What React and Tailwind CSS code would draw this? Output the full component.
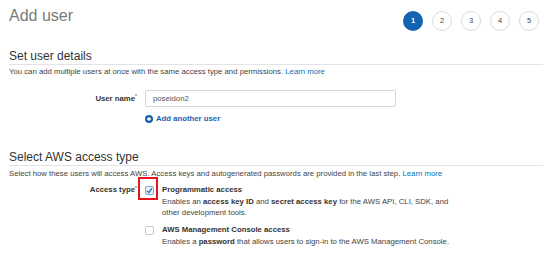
import React from 'react';

const STEPS = [1, 2, 3, 4, 5];

function StepCircle({ n, active }) {
  return (
    <div
      className={
        active
          ? 'w-[20px] h-[20px] rounded-full bg-[#1462b2] text-white flex items-center justify-center text-[7.5px] font-bold'
          : 'w-[20px] h-[20px] rounded-full bg-white border border-[#dcdcdc] text-[#444] flex items-center justify-center text-[7.5px]'
      }
    >
      {n}
    </div>
  );
}

function Checkbox({ checked }) {
  return checked ? (
    <div className="w-[9px] h-[9px] rounded-[2px] border border-[#7aa7d9] bg-[#e6f0fb] flex items-center justify-center">
      <svg width="7" height="7" viewBox="0 0 10 10">
        <path d="M1.5 5.5 L4 8 L8.5 2" fill="none" stroke="#1a5fb0" strokeWidth="1.8" />
      </svg>
    </div>
  ) : (
    <div className="w-[9px] h-[9px] rounded-[2px] border border-[#c8c8c8] bg-white" />
  );
}

export default function App() {
  return (
    <div className="w-[552px] h-[270px] bg-white px-[9px] overflow-hidden font-['Liberation_Sans',Arial,sans-serif] text-[#444]">
      {/* header */}
      <div className="flex items-start justify-between pt-[6px] pr-[4px]">
        <h1 className="text-[16px] leading-[20px] text-[#7a7a7a]">Add user</h1>
        <div className="flex gap-[9px] mt-[5px]">
          {STEPS.map((n) => (
            <StepCircle key={n} n={n} active={n === 1} />
          ))}
        </div>
      </div>

      {/* Set user details */}
      <h2 className="mt-[17px] text-[12px] leading-[16px] text-[#333] border-b border-[#e3e3e3]">Set user details</h2>
      <p className="mt-[2px] text-[7.75px] leading-[10px]">
        You can add multiple users at once with the same access type and permissions.{' '}
        <span className="text-[#0073bb]">Learn more</span>
      </p>

      <div className="mt-[13px] flex items-center gap-[8px]">
        <div className="w-[128px] text-right text-[7.75px] font-bold text-[#333]">
          User name<sup className="text-[5px] font-normal">*</sup>
        </div>
        <div className="w-[251px] h-[17px] border border-[#d5d5d5] rounded-[2px] flex items-center pl-[7px] text-[7.75px] text-[#555]">
          poseidon2
        </div>
      </div>

      <div className="mt-[7px] ml-[136px] flex items-center gap-[3px] text-[7.75px] leading-[10px] font-bold text-[#1a5fb0]">
        <svg width="8" height="8" viewBox="0 0 10 10">
          <circle cx="5" cy="5" r="5" fill="#1a5fb0" />
          <path d="M5 2.4 V7.6 M2.4 5 H7.6" stroke="white" strokeWidth="1.6" />
        </svg>
        Add another user
      </div>

      {/* Select AWS access type */}
      <h2 className="mt-[25px] text-[12px] leading-[16px] text-[#333] border-b border-[#e3e3e3]">Select AWS access type</h2>
      <p className="mt-[3px] text-[7.75px] leading-[10px]">
        Select how these users will access AWS. Access keys and autogenerated passwords are provided in the last step.{' '}
        <span className="text-[#0073bb]">Learn more</span>
      </p>

      <div className="mt-[5px] flex gap-[8px] text-[7.75px] leading-[11.7px]">
        <div className="w-[128px] shrink-0 text-right font-bold text-[#333]">
          Access type<sup className="text-[5px] font-normal">*</sup>
        </div>
        <div className="flex flex-col gap-[5.3px]">
          <div className="flex gap-[8px]">
            <div className="relative mt-[1.5px] shrink-0">
              <Checkbox checked />
              <div className="absolute left-[-7px] top-[-9px] w-[20px] h-[23px] border-2 border-[#e8141c]" />
            </div>
            <div className="w-[292px]">
              <div className="font-bold text-[#333]">Programmatic access</div>
              <div>
                Enables an <b className="text-[#333]">access key ID</b> and <b className="text-[#333]">secret access key</b> for the AWS API, CLI, SDK, and other development tools.
              </div>
            </div>
          </div>
          <div className="flex gap-[8px]">
            <div className="mt-[1.5px] shrink-0">
              <Checkbox />
            </div>
            <div className="w-[292px]">
              <div className="font-bold text-[#333]">AWS Management Console access</div>
              <div>
                Enables a <b className="text-[#333]">password</b> that allows users to sign-in to the AWS Management Console.
              </div>
            </div>
          </div>
        </div>
      </div>
    </div>
  );
}
